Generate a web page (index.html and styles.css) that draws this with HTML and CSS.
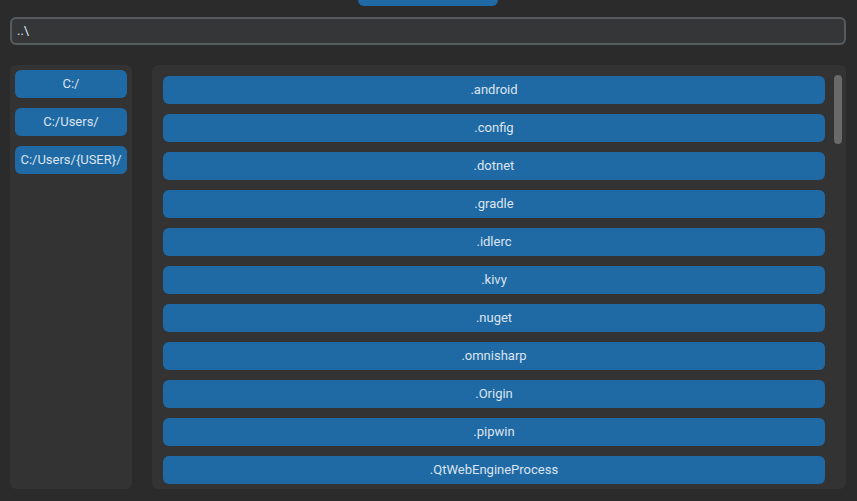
FILE: index.html
```html
<!DOCTYPE html>
<html>
<head>
<meta charset="utf-8">
<link rel="stylesheet" href="styles.css">
</head>
<body>
<div class="app">
  <div class="top"><div class="top-btn"></div></div>
  <div class="entry">..\</div>
  <div class="main">
    <div class="side">
      <div class="btn">C:/</div>
      <div class="btn">C:/Users/</div>
      <div class="btn">C:/Users/{USER}/</div>
    </div>
    <div class="files">
      <div class="list">
        <div class="btn">.android</div>
        <div class="btn">.config</div>
        <div class="btn">.dotnet</div>
        <div class="btn">.gradle</div>
        <div class="btn">.idlerc</div>
        <div class="btn">.kivy</div>
        <div class="btn">.nuget</div>
        <div class="btn">.omnisharp</div>
        <div class="btn">.Origin</div>
        <div class="btn">.pipwin</div>
        <div class="btn">.QtWebEngineProcess</div>
      </div>
      <div class="scrollbar"><div class="thumb"></div></div>
    </div>
  </div>
</div>
</body>
</html>
```
FILE: styles.css
```css
html, body {
  margin: 0;
  padding: 0;
  background: #2b2b2b;
  font-family: Roboto, "Liberation Sans", sans-serif;
  font-size: 13px;
  color: #dce4ee;
  overflow: hidden;
}
.app {
  width: 857px;
  height: 501px;
  padding: 0 11px 0 10px;
  box-sizing: border-box;
  display: flex;
  flex-direction: column;
}
.top {
  display: flex;
  justify-content: center;
  height: 5px;
  overflow: visible;
}
.top-btn {
  width: 140px;
  height: 28px;
  margin-top: -22px;
  margin-left: -1px;
  background: #1f6aa5;
  border-radius: 6px;
}
.entry {
  margin-top: 12px;
  height: 28px;
  box-sizing: border-box;
  border: 2px solid #565b5e;
  border-radius: 6px;
  background: #343638;
  padding: 0 5px;
  line-height: 23px;
  color: #dce4ee;
}
.main {
  margin-top: 20px;
  display: flex;
  gap: 20px;
  height: 424px;
}
.side {
  width: 122px;
  background: #333333;
  border-radius: 6px;
  padding: 5px;
  box-sizing: border-box;
  display: flex;
  flex-direction: column;
  gap: 10px;
}
.btn {
  height: 28px;
  flex: none;
  box-sizing: border-box;
  padding-bottom: 2px;
  background: #1f6aa5;
  border-radius: 6px;
  display: flex;
  align-items: center;
  justify-content: center;
  white-space: nowrap;
}
.files {
  flex: 1;
  background: #333333;
  border-radius: 6px;
  padding: 10px 4px 4px 11px;
  box-sizing: border-box;
  display: flex;
  gap: 9px;
}
.list {
  flex: 1;
  padding-top: 1px;
  overflow: hidden;
  display: flex;
  flex-direction: column;
  gap: 10px;
}
.scrollbar {
  width: 8px;
}
.thumb {
  height: 69px;
  background: #696969;
  border-radius: 4px;
}
```
